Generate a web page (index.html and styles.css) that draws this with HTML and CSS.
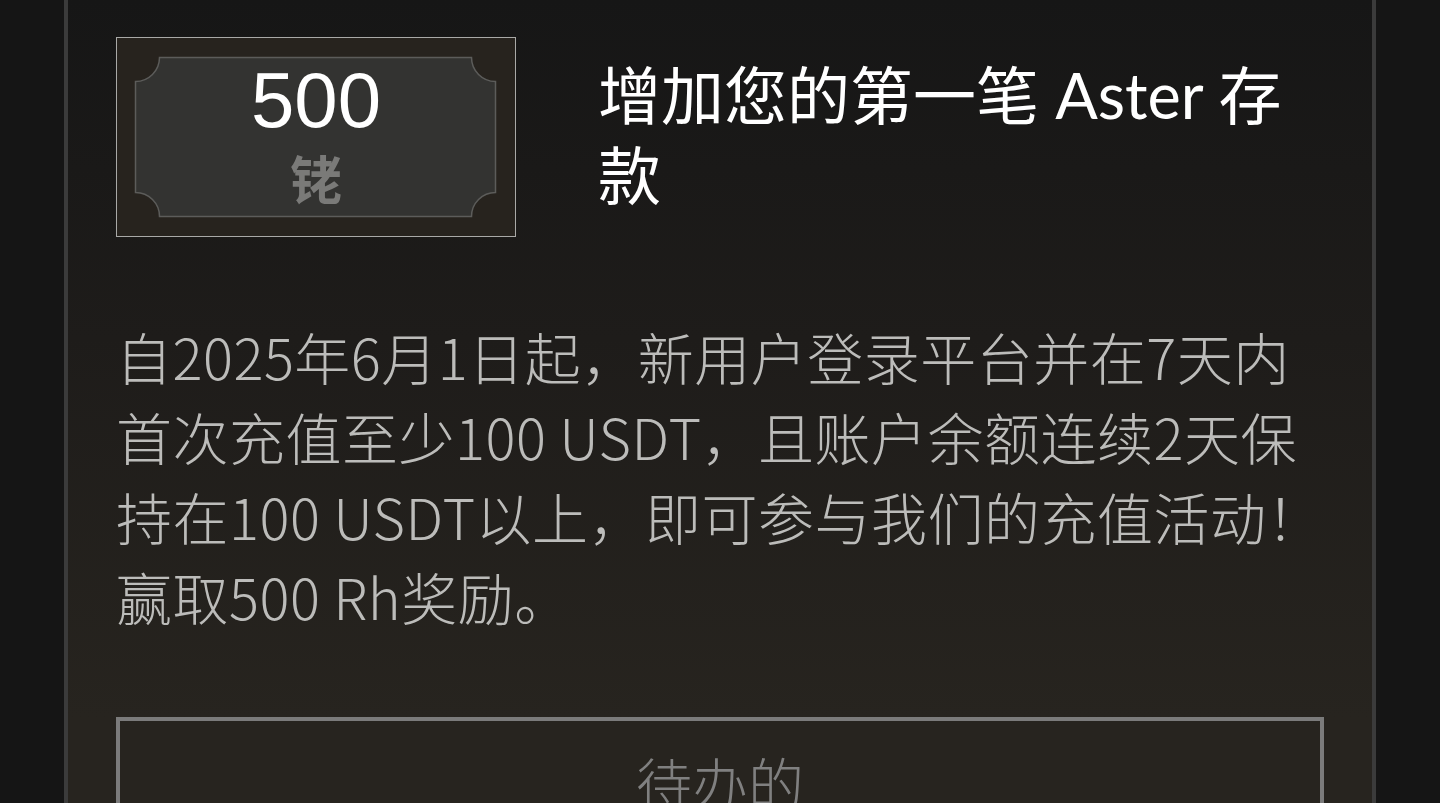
FILE: index.html
```html
<!DOCTYPE html>
<html lang="zh-CN">
<head>
  <meta charset="UTF-8" />
  <meta name="viewport" content="width=device-width, initial-scale=1.0"/>
  <title>增加您的第一笔 Aster 存款</title>
  <link rel="stylesheet" href="styles.css">
</head>
<body>
  <div class="panel">
    <div class="task-head">
      <div class="ticket">
        <svg class="ticket-bg" width="400" height="200" viewBox="0 0 400 200">
          <path d="M43.5 20.5 H355.5 A24 24 0 0 0 379.5 44.5 V155.5 A24 24 0 0 0 355.5 179.5 H43.5 A24 24 0 0 0 19.5 155.5 V44.5 A24 24 0 0 0 43.5 20.5 Z" fill="#333331" stroke="#5c5c5a" stroke-width="1.5"/>
        </svg>
        <div class="ticket-amount">500</div>
        <div class="ticket-unit">铑</div>
      </div>
      <h2 class="task-title">增加您的第一笔 Aster 存款</h2>
    </div>

    <p class="task-desc">自2025年6月1日起，新用户登录平台并在7天内首次充值至少100 USDT，且账户余额连续2天保持在100 USDT以上，即可参与我们的充值活动！赢取500 Rh奖励。</p>

    <button class="task-btn">待办的</button>
  </div>
</body>
</html>
```

FILE: styles.css
```css
body {
  margin: 0;
  background: #151515;
  font-family: "Noto Sans CJK SC", "Noto Sans", sans-serif;
  height: 803px;
  overflow: hidden;
}
.panel {
  margin: 0 64px;
  min-height: 803px;
  box-sizing: border-box;
  padding: 37px 48px 0;
  border-left: 4px solid #3b3b3b;
  border-right: 4px solid #3b3b3b;
  background: linear-gradient(to bottom, #161616 0%, #1e1c1a 40%, #27241f 85%, #27241f 100%);
}
.task-head {
  display: flex;
  gap: 82px;
}
.ticket {
  position: relative;
  flex: 0 0 400px;
  height: 200px;
  box-sizing: border-box;
  border: 1px solid #a9a9a7;
  background: #27231e;
  text-align: center;
  padding-top: 22px;
}
.ticket-bg {
  position: absolute;
  left: -1px;
  top: -1px;
}
.ticket-amount {
  position: relative;
  font-family: "Liberation Sans", Arial, sans-serif;
  font-size: 78px;
  font-weight: 500;
  line-height: 80px;
  color: #ffffff;
}
.ticket-unit {
  position: relative;
  margin-top: 6px;
  font-size: 52px;
  font-weight: bold;
  line-height: 64px;
  color: #7a7a78;
}
.task-title {
  flex: 1;
  margin: 18px 0 0;
  font-family: "Lato", "Noto Sans CJK SC", sans-serif;
  font-size: 63px;
  font-weight: normal;
  line-height: 80px;
  color: #ffffff;
}
.task-desc {
  margin: 79px 0 0;
  font-size: 56px;
  font-weight: 300;
  line-height: 80px;
  letter-spacing: 0.5px;
  color: #bcbcba;
}
.task-btn {
  display: block;
  width: 100%;
  margin-top: 81px;
  padding: 20px 0;
  background: transparent;
  border: 4px solid #7b7b7b;
  font-family: "Noto Sans CJK SC", sans-serif;
  font-size: 56px;
  font-weight: 300;
  line-height: 80px;
  color: #808080;
}
```
